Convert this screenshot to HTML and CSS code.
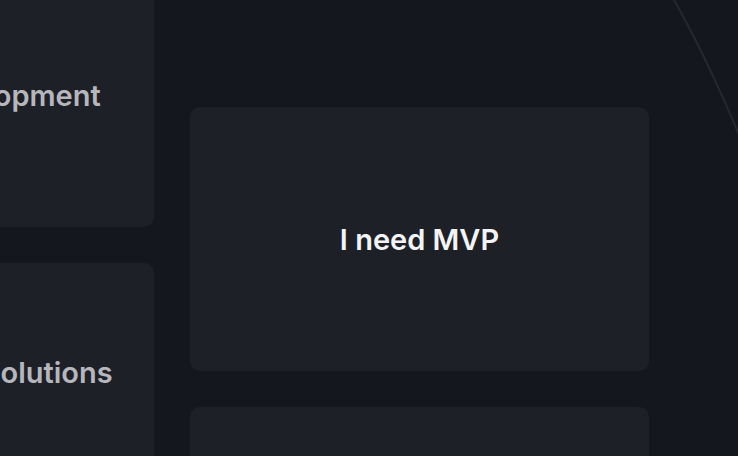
FILE: index.html
```html
<!DOCTYPE html>
<html>
<head>
<meta charset="utf-8">
<link rel="stylesheet" href="styles.css">
</head>
<body>
<div class="page">
  <svg class="arc" width="738" height="456" viewBox="0 0 738 456" aria-hidden="true">
    <path d="M673 -2 Q 708 60 742 142" fill="none" stroke="#262830" stroke-width="2"/>
  </svg>
  <div class="grid">
    <div class="col col-left">
      <div class="card card-a"><span class="label muted">Mobile App Development</span></div>
      <div class="card card-b"><span class="label muted">Enterprise Digital solutions</span></div>
    </div>
    <div class="col col-mid">
      <div class="card"><span class="label bright">I need MVP</span></div>
      <div class="card"><span class="label bright">I need a team</span></div>
    </div>
  </div>
</div>
</body>
</html>
```
FILE: styles.css
```css
html, body {
  margin: 0;
  padding: 0;
  background: #15171e;
  overflow: hidden;
}
.page {
  position: relative;
  width: 738px;
  height: 456px;
  overflow: hidden;
  font-family: Inter, "Noto Sans", sans-serif;
}
.arc {
  position: absolute;
  left: 0;
  top: 0;
}
.grid {
  display: flex;
  gap: 36px;
  margin-left: -305px;
}
.col {
  display: flex;
  flex-direction: column;
  gap: 36px;
  width: 459px;
  flex: none;
}
.col-left {
  margin-top: -37px;
}
.col-mid {
  margin-top: 107px;
}
.card {
  height: 264px;
  background: #1e2028;
  border-radius: 10px;
  display: flex;
  align-items: center;
  justify-content: center;
}
.card-b {
  height: 218px;
}
.label {
  font-size: 29px;
  font-weight: 600;
  letter-spacing: 0;
  white-space: nowrap;
}
.muted {
  color: #b6b7bc;
}
.bright {
  color: #f4f4f6;
}
```
